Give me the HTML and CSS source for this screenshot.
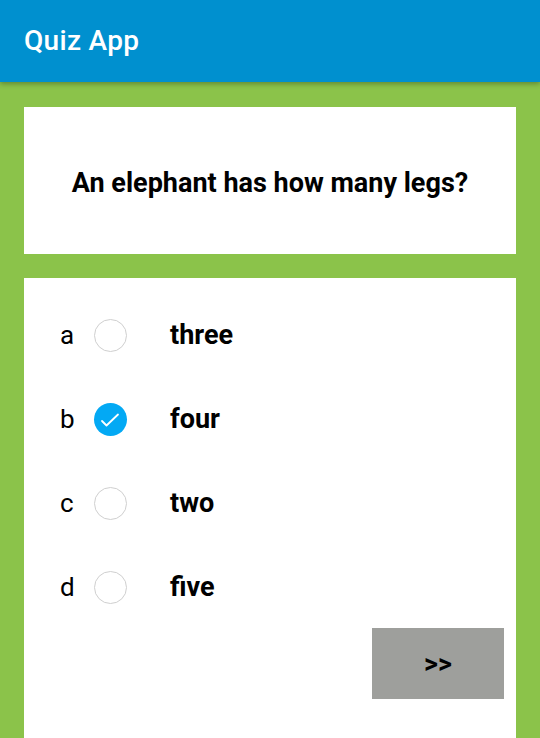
FILE: index.html
```html
<!DOCTYPE html>
<html>
<head>
<meta charset="utf-8">
<link rel="stylesheet" href="styles.css">
</head>
<body>
<header class="appbar"><span class="title">Quiz App</span></header>
<main class="content">
  <section class="card question-card">
    <h1 class="question">An elephant has how many legs?</h1>
  </section>
  <section class="card options-card">
    <div class="option">
      <span class="letter">a</span>
      <span class="radio"></span>
      <span class="answer">three</span>
    </div>
    <div class="option">
      <span class="letter">b</span>
      <span class="radio checked">
        <svg width="33" height="33" viewBox="0 0 33 33"><polyline points="8,18 12.5,22.5 24,11.5" fill="none" stroke="#fff" stroke-width="1.8" stroke-linecap="round" stroke-linejoin="round"/></svg>
      </span>
      <span class="answer">four</span>
    </div>
    <div class="option">
      <span class="letter">c</span>
      <span class="radio"></span>
      <span class="answer">two</span>
    </div>
    <div class="option">
      <span class="letter">d</span>
      <span class="radio"></span>
      <span class="answer">five</span>
    </div>
    <div class="actions">
      <button class="next">&gt;&gt;</button>
    </div>
  </section>
</main>
</body>
</html>
```
FILE: styles.css
```css
* { box-sizing: border-box; }
html, body { margin: 0; padding: 0; }
body {
  width: 540px;
  height: 738px;
  overflow: hidden;
  background: #8BC34A;
  font-family: Roboto, "Noto Sans", sans-serif;
}
.appbar {
  height: 82px;
  background: #0090CF;
  display: flex;
  align-items: center;
  padding: 0 24px;
  box-shadow: 0 2px 5px rgba(0,0,0,0.3);
  position: relative;
}
.title {
  color: #fff;
  font-size: 28px;
  font-weight: 500;
  letter-spacing: 0.3px;
  margin-top: -2px;
}
.content {
  padding: 25px 24px 0 24px;
  display: flex;
  flex-direction: column;
  gap: 24px;
}
.card { background: #fff; }
.question-card {
  height: 147px;
  display: flex;
  align-items: center;
  justify-content: center;
}
.question {
  margin: 0;
  font-size: 27px;
  font-weight: 700;
  color: #000;
  margin-top: 4px;
}
.options-card {
  padding: 15px 12px 60px 36px;
  display: flex;
  flex-direction: column;
}
.option {
  height: 84px;
  display: flex;
  align-items: center;
}
.letter {
  width: 34px;
  font-size: 26px;
  color: #000;
}
.radio {
  width: 33px;
  height: 33px;
  border-radius: 50%;
  border: 1.5px solid #cfcfcf;
  display: flex;
  align-items: center;
  justify-content: center;
}
.radio.checked {
  border: none;
  background: #03A9F4;
}
.answer {
  margin-left: 43px;
  font-size: 27px;
  font-weight: 700;
  color: #000;
}
.actions {
  display: flex;
  justify-content: flex-end;
  margin-top: -1px;
}
.next {
  width: 132px;
  height: 71px;
  border: none;
  background: #9E9F9C;
  color: #000;
  font-family: Roboto, sans-serif;
  font-weight: 700;
  font-size: 27px;
  padding: 0;
}
```
